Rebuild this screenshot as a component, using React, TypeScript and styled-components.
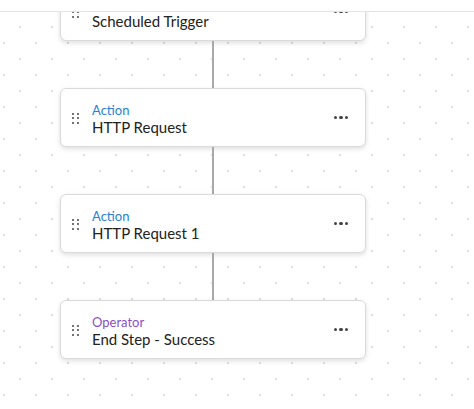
import styled, {createGlobalStyle} from "styled-components"

interface Step {
    kind?: string
    title: string
    color: string
}

// first node's type label sits under the top bar, so it is left empty
const steps: Step[] = [
    {title: "Scheduled Trigger", color: "#2a7fd4"},
    {kind: "Action", title: "HTTP Request", color: "#2a7fd4"},
    {kind: "Action", title: "HTTP Request 1", color: "#2a7fd4"},
    {kind: "Operator", title: "End Step - Success", color: "#8a4fc4"},
]

export default function App() {
    return (
        <>
            <Global />
            <Canvas>
                <TopBar />
                <Viewport>
                    {steps.map((step, i) => (
                        <Node key={i}>
                            {i > 0 && <Edge />}
                            <Card>
                                <Handle>
                                    {Array.from({length: 6}).map((_, d) => <span key={d} />)}
                                </Handle>
                                <Body>
                                    <Kind $color={step.color}>{step.kind}</Kind>
                                    <Title>{step.title}</Title>
                                </Body>
                                <More>
                                    <span /><span /><span />
                                </More>
                            </Card>
                        </Node>
                    ))}
                </Viewport>
            </Canvas>
        </>
    )
}

const Global = createGlobalStyle`
html, body {
    margin: 0;
    padding: 0;
    background: #fff;
}
body {
    font-family: Lato, "Noto Sans", sans-serif;
}
`

const Canvas = styled.div`
position: relative;
width: 474px;
height: 409px;
overflow: hidden;
background-color: #fff;
background-image:
    radial-gradient(circle, #dcdcdc 0.9px, transparent 1.4px),
    radial-gradient(circle, #dcdcdc 0.9px, transparent 1.4px);
background-size: 32px 32px, 32px 32px;
background-position: -12px -5px, 4px 11px;
`

const TopBar = styled.div`
position: absolute;
top: 0;
left: 0;
right: 0;
height: 11px;
background: #fff;
border-bottom: 1px solid #e3e3e3;
z-index: 2;
`

const Viewport = styled.div`
display: flex;
flex-direction: column;
width: 306px;
transform: translate(60px, -18px);
`

const Node = styled.div`
display: flex;
flex-direction: column;
align-items: center;
`

const Edge = styled.div`
width: 2px;
height: 47px;
background: #a9a9a9;
`

const Card = styled.div`
box-sizing: border-box;
width: 306px;
height: 59px;
display: flex;
align-items: center;
padding: 0 17px 0 10px;
background: #fff;
border: 1px solid #dadada;
border-radius: 6px;
box-shadow: 0 2px 5px rgba(0, 0, 0, 0.13);
`

const Handle = styled.div`
display: grid;
grid-template-columns: 2px 2px;
grid-auto-rows: 2px;
column-gap: 3px;
row-gap: 2.5px;
width: 7px;
margin-left: 1px;
margin-top: 1px;
span {
    width: 2.2px;
    height: 2.2px;
    border-radius: 50%;
    background: #444;
}
`

const Body = styled.div`
flex: 1;
display: flex;
flex-direction: column;
margin-left: 13px;
margin-top: 3px;
`

const Kind = styled.div<{$color: string}>`
font-size: 13px;
line-height: 16px;
height: 16px;
color: ${props => props.$color};
`

const Title = styled.div`
font-size: 15px;
line-height: 19px;
color: #222;
`

const More = styled.div`
display: flex;
gap: 2px;
span {
    width: 3.5px;
    height: 3.5px;
    border-radius: 50%;
    background: #444;
}
`
